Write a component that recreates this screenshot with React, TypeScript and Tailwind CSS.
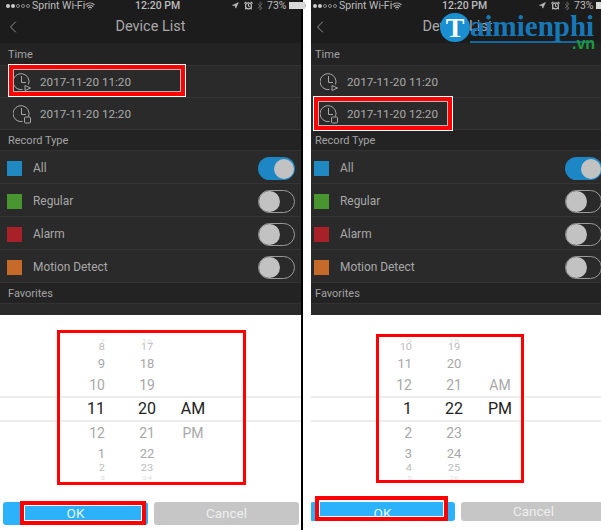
import React from 'react';
import { AlarmClock, Bluetooth, ChevronLeft, Navigation, Wifi } from 'lucide-react';

const drum = [
  { row: 'h-[6px] text-[10px] text-[#e2e2e2]', inner: 'scale-y-50' },
  { row: 'h-[9px] text-[11px] text-[#bbbbbb]', inner: 'scale-y-75' },
  { row: 'h-[22px] text-[13px] text-[#a8a8a8]', inner: '' },
  { row: 'h-[21px] text-[14px] text-[#a8a8a8]', inner: '' },
  { row: 'h-[26px] text-[16px] text-[#222222] border-y-2 border-[#ededed]', inner: '' },
  { row: 'h-[23px] text-[14px] text-[#a8a8a8]', inner: '' },
  { row: 'h-[18px] text-[13px] text-[#a8a8a8]', inner: '' },
  { row: 'h-[12px] text-[11px] text-[#bbbbbb]', inner: 'scale-y-75' },
  { row: 'h-[8px] text-[9px] text-[#e2e2e2]', inner: 'scale-y-50' },
];

const ClockIcon = ({ second }: { second?: boolean }) => (
  <svg width="20" height="20" viewBox="0 0 20 20" fill="none" stroke="#a6a6a6" strokeWidth="1">
    <path d="M15.5 12.5A8 8 0 1 0 9.5 17.5" />
    <path d="M8.5 4v6.5h4.5" />
    {second ? <rect x="11.5" y="13" width="6" height="6" rx="1" /> : <path d="M12 13.5l5.5 2.5-5.5 2.5z" />}
  </svg>
);

const Section = ({ label, height }: { label: string; height: string }) => (
  <div className={`flex items-center border-b border-[#333333] bg-[#232323] pt-[2px] pl-2 text-[11px] text-[#a3a3a3] ${height}`}>{label}</div>
);

const TimeRow = ({ label, second }: { label: string; second?: boolean }) => (
  <div className="flex h-[32px] items-center gap-[7px] border-b border-[#353535] pl-[13px] text-[11.7px] text-[#aaaaaa]">
    <ClockIcon second={second} />
    <span className="pt-[2px]">{label}</span>
  </div>
);

const RecordRow = ({ label, color, on }: { label: string; color: string; on?: boolean }) => (
  <div className="flex h-[33px] items-center border-b border-[#353535] pt-[3px] pr-[6px] pl-[7px] text-[11.9px] text-[#a8a8a8]">
    <span className={`h-[15px] w-[15px] ${color}`}></span>
    <span className="ml-[11px]">{label}</span>
    {on ? (
      <span className="ml-auto flex h-[23px] w-[37px] items-center justify-end rounded-full bg-[#1d86c4] pr-[1px]">
        <span className="h-[20px] w-[20px] rounded-full bg-[#c2c2c2]"></span>
      </span>
    ) : (
      <span className="ml-auto flex h-[23px] w-[37px] items-center rounded-full border border-[#9a9a9a]">
        <span className="h-[21px] w-[21px] rounded-full bg-[#c2c2c2]"></span>
      </span>
    )}
  </div>
);

const Phone = ({ hours, minutes, meridiem, okClass, cancelClass, children }: {
  hours: string[];
  minutes: string[];
  meridiem: string[];
  okClass: string;
  cancelClass: string;
  children?: React.ReactNode;
}) => (
  <div className="relative h-[530px] w-[301px] shrink-0 bg-white">
    <div className="h-[315px] bg-[#2a2a2a]">
      <div className="h-[43px] bg-[#1c1c1c]">
        <div className="flex h-[11px] items-center pr-[4px] pl-[6px] text-[10.5px] whitespace-nowrap text-[#bdbdbd]">
          <span className="flex w-[24px] shrink-0 gap-[1px]">
            <i className="h-[4px] w-[4px] rounded-full bg-[#cccccc]"></i>
            <i className="h-[4px] w-[4px] rounded-full bg-[#cccccc]"></i>
            <i className="h-[4px] w-[4px] rounded-full border border-[#888888]"></i>
            <i className="h-[4px] w-[4px] rounded-full border border-[#888888]"></i>
            <i className="h-[4px] w-[4px] rounded-full border border-[#888888]"></i>
          </span>
          <span className="ml-[2px] w-[53px] shrink-0">Sprint Wi-Fi</span>
          <Wifi size={10} strokeWidth={2.5} className="shrink-0" />
          <span className="ml-[40px] w-[42px] shrink-0 font-medium">12:20 PM</span>
          <Navigation size={7} fill="#bdbdbd" className="ml-[55px] shrink-0" />
          <AlarmClock size={9} strokeWidth={3} className="ml-[5px] shrink-0" />
          <Bluetooth size={10} className="ml-[2px] shrink-0 text-[#666666]" />
          <span className="ml-[2px] text-[10.5px]">73%</span>
          <span className="ml-[2px] h-[7px] w-[16px] shrink-0 bg-[#d8d8d8]"></span>
          <span className="h-[3px] w-[1px] shrink-0 bg-[#bbbbbb]"></span>
        </div>
        <div className="relative flex h-[32px] items-center justify-center text-[14.5px] text-[#a9a9a9]">
          <ChevronLeft size={20} strokeWidth={1} className="absolute left-[3px]" />
          Device List
        </div>
      </div>
      <Section label="Time" height="h-[23px]" />
      <TimeRow label="2017-11-20 11:20" />
      <TimeRow label="2017-11-20 12:20" second />
      <Section label="Record Type" height="h-[21px]" />
      <RecordRow label="All" color="bg-[#2189c2]" on />
      <RecordRow label="Regular" color="bg-[#47962f]" />
      <RecordRow label="Alarm" color="bg-[#a92128]" />
      <RecordRow label="Motion Detect" color="bg-[#c56a28]" />
      <Section label="Favorites" height="h-[21px]" />
    </div>
    <div className="pt-[23px]">
      {drum.map((d, i) => (
        <div key={i} className={`flex items-center pl-[75px] ${d.row}`}>
          <span className={`w-[30px] text-right ${d.inner}`}>{hours[i]}</span>
          <span className={`ml-[18px] w-[48px] text-center ${d.inner}`}>{minutes[i]}</span>
          <span className="w-[44px] text-center">{meridiem[i]}</span>
        </div>
      ))}
    </div>
    <div className="mt-[19px] flex gap-[6px] pl-[3px] text-[13.5px]">
      <div className={`flex w-[145px] items-center justify-center rounded-[3px] bg-[#2cb2fb] text-[#e6f5ff] ${okClass}`}>OK</div>
      <div className={`flex w-[145px] items-center justify-center rounded-[3px] bg-[#c6c6c6] text-[#eeeeee] ${cancelClass}`}>Cancel</div>
    </div>
    {children}
  </div>
);

const RedBox = ({ className }: { className: string }) => (
  <div className={`absolute ${className}`}></div>
);

const rowMark = 'shadow-[inset_0_0_0_1px_#ffffff,inset_0_0_0_5px_#ff0000,inset_0_0_0_6px_#b5b5b5]';
const okMark = 'shadow-[inset_0_0_0_4px_#ff0000,inset_0_0_0_5px_#ffffff]';

export default function App() {
  return (
    <div className="flex h-[530px] w-[601px] overflow-hidden bg-white font-['Roboto',sans-serif]">
      <div className="relative w-[301px] shrink-0">
        <Phone
          hours={['7', '8', '9', '10', '11', '12', '1', '2', '3']}
          minutes={['16', '17', '18', '19', '20', '21', '22', '23', '24']}
          meridiem={['', '', '', '', 'AM', 'PM', '', '', '']}
          okClass="h-[23px]"
          cancelClass="h-[23px]"
        >
          <RedBox className={`top-[64px] left-[8px] h-[33px] w-[178px] ${rowMark}`} />
          <RedBox className="top-[330px] left-[57px] h-[155px] w-[189px] border-[3px] border-[#ff0000]" />
          <RedBox className={`top-[501px] left-[20px] h-[24px] w-[126px] ${okMark}`} />
        </Phone>
      </div>
      <div className="w-[2px] shrink-0 bg-black"></div>
      <div className="w-[8px] shrink-0 bg-white"></div>
      <div className="w-[290px] shrink-0 overflow-hidden">
        <div className="-ml-[4px]">
          <Phone
            hours={['9', '10', '11', '12', '1', '2', '3', '4', '5']}
            minutes={['18', '19', '20', '21', '22', '23', '24', '25', '26']}
            meridiem={['', '', '', 'AM', 'PM', '', '', '', '']}
            okClass="h-[19px] pt-[3px]"
            cancelClass="h-[19px]"
          >
            <RedBox className={`top-[96px] left-[6px] h-[35px] w-[140px] ${rowMark}`} />
            <RedBox className="top-[334px] left-[69px] h-[149px] w-[148px] border-[3px] border-[#ff0000]" />
            <RedBox className={`top-[496px] left-[8px] h-[25px] w-[133px] ${okMark}`} />
            <div className="absolute top-[13px] left-[133px] flex h-[29px] w-[30px] items-center justify-center rounded-full bg-[#1a8fd1] font-['Liberation_Serif',serif] text-[28px] font-bold text-white">T</div>
            <div className="absolute top-[12px] left-[163px] border-b-2 border-[#14689e] font-['Liberation_Serif',serif] text-[29px] leading-[29px] font-bold text-[#1678b8]">aimienphi</div>
            <div className="absolute top-[36px] left-[265px] font-['Liberation_Sans',sans-serif] text-[16px] leading-[16px] font-bold text-[#1c9a3c]">.vn</div>
          </Phone>
        </div>
      </div>
    </div>
  );
}
